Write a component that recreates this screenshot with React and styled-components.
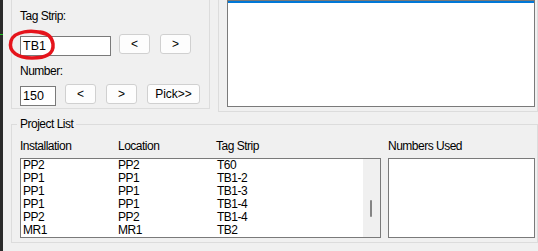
import React from 'react';
import styled, { createGlobalStyle } from 'styled-components';

const GlobalStyle = createGlobalStyle`
  html, body {
    margin: 0;
    padding: 0;
    background: #f0f0f0;
  }
  * {
    box-sizing: border-box;
  }
`;

const Window = styled.div`
  position: relative;
  display: flex;
  width: 538px;
  height: 251px;
  overflow: hidden;
  background: #f0f0f0;
  font-family: "Liberation Sans", Arial, sans-serif;
  font-size: 12px;
  letter-spacing: -0.5px;
  color: #000;
`;

const EdgeStrip = styled.div`
  flex: 0 0 3px;
  background: #2b2b2b;
  display: flex;
  flex-direction: column;
  .tick {
    margin-top: 34px;
    height: 1px;
    background: #22c322;
  }
`;

const Main = styled.div`
  flex: 1;
  display: flex;
  flex-direction: column;
  padding-left: 8px;
`;

const TopRow = styled.div`
  display: flex;
  align-items: flex-start;
  gap: 8px;
  height: 112px;
`;

const Group = styled.div`
  border: 1px solid #dcdcdc;
  border-top: none;
  width: ${(p) => p.$w || 'auto'};
  flex: ${(p) => (p.$grow ? 1 : '0 0 auto')};
  height: ${(p) => p.$h}px;
  padding: ${(p) => p.$pad};
`;

const Label = styled.div`
  height: 13px;
  line-height: 13px;
  margin-top: ${(p) => p.$mt || 0}px;
  white-space: nowrap;
`;

const Row = styled.div`
  display: flex;
  align-items: flex-start;
  margin-top: ${(p) => p.$mt || 0}px;
`;

const TextBox = styled.div`
  width: ${(p) => p.$w}px;
  height: 20px;
  margin-top: 2px;
  border: 1px solid #7a7a7a;
  background: #fff;
  padding-left: 2px;
  font-size: 12.5px;
  line-height: 18px;
  letter-spacing: 0;
`;

const Button = styled.button`
  width: ${(p) => p.$w}px;
  height: 20px;
  margin-left: ${(p) => p.$ml}px;
  padding: 0;
  border: 1px solid #d0d0d0;
  border-radius: 3px;
  background: #fdfdfd;
  font: inherit;
  letter-spacing: 0;
  color: #000;
  line-height: 18px;
`;

const ListBox = styled.div`
  position: relative;
  border: 1px solid #7a7a7a;
  background: #fff;
  height: ${(p) => p.$h}px;
  display: flex;
`;

const SelectedBar = styled.div`
  height: 2px;
  width: 100%;
  background: #0078d7;
`;

const ProjectSet = styled.fieldset`
  margin: 6px 0 0 0;
  padding: 9px 2px 4px 5px;
  border: 1px solid #dcdcdc;
  min-width: 0;
  legend {
    padding: 0 3px;
    height: 13px;
    line-height: 13px;
  }
`;

const Columns = styled.div`
  display: flex;
  gap: 7px;
  padding-left: 3px;
`;

const Column = styled.div`
  width: ${(p) => p.$w}px;
  display: flex;
  flex-direction: column;
  gap: 5px;
`;

const HeaderGrid = styled.div`
  display: grid;
  grid-template-columns: 98px 98px 1fr;
  height: 13px;
  line-height: 13px;
`;

const Rows = styled.div`
  flex: 1;
  padding-left: 2px;
`;

const ItemRow = styled.div`
  display: grid;
  grid-template-columns: 95px 99px 1fr;
  height: 13px;
  line-height: 13px;
`;

const ScrollTrack = styled.div`
  flex: 0 0 17px;
  background: #f0f0f0;
  display: flex;
  flex-direction: column;
  align-items: flex-start;
  padding-left: 7px;
  padding-top: 41px;
`;

const Thumb = styled.div`
  width: 2px;
  height: 17px;
  border-radius: 1px;
  background: #858585;
`;

const Annotation = styled.svg`
  position: absolute;
  left: 0;
  top: 0;
  pointer-events: none;
`;

const projects = [
  ['PP2', 'PP2', 'T60'],
  ['PP1', 'PP1', 'TB1-2'],
  ['PP1', 'PP1', 'TB1-3'],
  ['PP1', 'PP1', 'TB1-4'],
  ['PP2', 'PP2', 'TB1-4'],
  ['MR1', 'MR1', 'TB2'],
];

export default function App() {
  return (
    <>
      <GlobalStyle />
      <Window>
        <EdgeStrip>
          <div className="tick" />
        </EdgeStrip>
        <Main>
          <TopRow>
            <Group $w="199px" $h={109} $pad="10px 0 0 8px">
              <Label>Tag Strip:</Label>
              <Row $mt={11}>
                <TextBox $w={91}>TB1</TextBox>
                <Button $w={31} $ml={8}>&lt;</Button>
                <Button $w={31} $ml={10}>&gt;</Button>
              </Row>
              <Label $mt={9}>Number:</Label>
              <Row $mt={6}>
                <TextBox $w={36}>150</TextBox>
                <Button $w={31} $ml={9}>&lt;</Button>
                <Button $w={31} $ml={10}>&gt;</Button>
                <Button $w={53} $ml={10}>Pick&gt;&gt;</Button>
              </Row>
            </Group>
            <Group $grow $h={112} $pad="0 2px 4px 8px">
              <ListBox $h={107}>
                <SelectedBar />
              </ListBox>
            </Group>
          </TopRow>

          <ProjectSet>
            <legend>Project List</legend>
            <Columns>
              <Column $w={361}>
                <HeaderGrid>
                  <span>Installation</span>
                  <span>Location</span>
                  <span>Tag Strip</span>
                </HeaderGrid>
                <ListBox $h={80}>
                  <Rows>
                    {projects.map((r, i) => (
                      <ItemRow key={i}>
                        <span>{r[0]}</span>
                        <span>{r[1]}</span>
                        <span>{r[2]}</span>
                      </ItemRow>
                    ))}
                  </Rows>
                  <ScrollTrack>
                    <Thumb />
                  </ScrollTrack>
                </ListBox>
              </Column>
              <Column $w={147}>
                <HeaderGrid>
                  <span>Numbers Used</span>
                </HeaderGrid>
                <ListBox $h={80} />
              </Column>
            </Columns>
          </ProjectSet>
        </Main>

        <Annotation width="70" height="70" viewBox="0 0 70 70">
          <path
            d="M46 34 C32 29, 14 31, 11 41 C8 52, 18 58, 32 58 C46 58, 54 54, 53 44 C52 37, 48 33, 40 32"
            fill="none"
            stroke="#e5141c"
            strokeWidth="3.5"
            strokeLinecap="round"
          />
        </Annotation>
      </Window>
    </>
  );
}
